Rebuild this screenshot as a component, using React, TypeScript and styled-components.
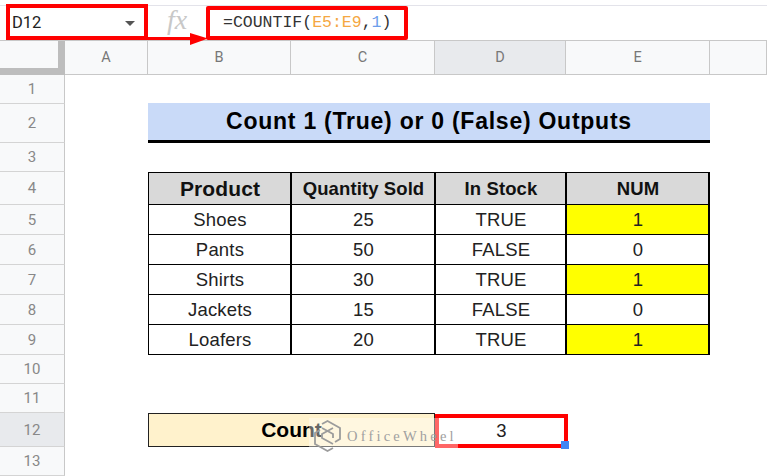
import React from "react";
import styled, { createGlobalStyle } from "styled-components";

const Global = createGlobalStyle`
  html, body { margin: 0; padding: 0; background: #fff; overflow: hidden; }
  body { font-family: Roboto, "Liberation Sans", sans-serif; }
`;

const Page = styled.div`
  position: relative;
  width: 767px;
  height: 476px;
  overflow: hidden;
  background: #fff;
`;

const FormulaBar = styled.div`
  height: 41px;
  box-sizing: border-box;
  padding-top: 4px;
  display: flex;
  align-items: flex-start;
  border-bottom: 1px solid #c8c8c8;
  position: relative;
  &::before {
    content: "";
    position: absolute;
    left: 0;
    right: 0;
    top: 5px;
    height: 1px;
    background: #e3e3ea;
  }
`;

const NameBox = styled.div`
  position: relative;
  z-index: 1;
  margin-left: 6px;
  width: 142px;
  height: 36px;
  box-sizing: border-box;
  border: 4px solid #f00;
  background: #fff;
  display: flex;
  align-items: center;
  justify-content: space-between;
  padding: 0 9px 0 2px;
  font-size: 16.5px;
  color: #222;
`;

const Caret = styled.span`
  width: 0;
  height: 0;
  border-left: 5px solid transparent;
  border-right: 5px solid transparent;
  border-top: 5px solid #555;
  margin-top: 2px;
`;

const FxSlot = styled.div`
  width: 58px;
  text-align: center;
  font-family: "Liberation Serif", serif;
  font-style: italic;
  font-size: 28px;
  line-height: 32px;
  color: #c8c8c8;
`;

const FormulaBox = styled.div`
  position: relative;
  z-index: 1;
  width: 202px;
  height: 34px;
  margin-top: 2px;
  box-sizing: border-box;
  border: 4px solid #f00;
  border-radius: 2px;
  background: #fff;
  font-family: "Liberation Mono", monospace;
  font-size: 16.5px;
  line-height: 26px;
  padding-left: 13px;
  color: #333;
  white-space: nowrap;
`;

const Tok = styled.span<{ $c: string }>`
  color: ${(p) => p.$c};
`;

const Arrow = styled.svg`
  position: absolute;
  left: 140px;
  top: 32px;
  z-index: 2;
`;

const Sheet = styled.div`
  display: grid;
  grid-template-columns: 65px 83px 143px 144px 131px 144px 57px;
  grid-template-rows: 34px 29px 39px 29px 33px repeat(5, 30px) 29px 29px 34px 29px;
`;

const Corner = styled.div`
  background: #f8f9fa;
  border-right: 7px solid #bdbdbd;
  border-bottom: 7px solid #bdbdbd;
  box-sizing: border-box;
`;

const ColHead = styled.div<{ $active?: boolean }>`
  background: ${(p) => (p.$active ? "#e8eaed" : "#f8f9fa")};
  border-right: 1px solid #c8c8c8;
  border-bottom: 1px solid #c8c8c8;
  box-sizing: border-box;
  display: flex;
  align-items: center;
  justify-content: center;
  font-size: 14.5px;
  color: #777;
`;

const RowHead = styled.div<{ $active?: boolean; $row: number }>`
  grid-column: 1;
  grid-row: ${(p) => p.$row};
  background: ${(p) => (p.$active ? "#e8eaed" : "#f8f9fa")};
  border-right: 1px solid #c8c8c8;
  border-bottom: 1px solid #d4d4d4;
  box-sizing: border-box;
  display: flex;
  align-items: center;
  justify-content: center;
  font-size: 15px;
  color: #888;
`;

const Title = styled.div`
  grid-column: 3 / 7;
  grid-row: 3;
  margin-top: -1px;
  background: #c9daf8;
  border-bottom: 3px solid #000;
  box-sizing: border-box;
  display: flex;
  align-items: center;
  justify-content: center;
  font-family: "Liberation Sans", sans-serif;
  font-weight: 700;
  font-size: 23px;
  letter-spacing: 0.75px;
  color: #000;
`;

const Table = styled.div`
  grid-column: 3 / 7;
  grid-row: 5 / 11;
  display: grid;
  grid-template-columns: 143px 144px 131px 143px;
  grid-template-rows: 32px repeat(5, 30px);
  border-top: 1px solid #000;
  border-left: 1px solid #000;
  box-sizing: border-box;
`;

const HeadCell = styled.div<{ $size: number }>`
  background: #d9d9d9;
  border-right: 2px solid #000;
  border-bottom: 1px solid #000;
  box-sizing: border-box;
  display: flex;
  align-items: center;
  justify-content: center;
  padding-left: 1px;
  font-family: "Liberation Sans", sans-serif;
  font-weight: 700;
  font-size: ${(p) => p.$size}px;
  letter-spacing: 0.1px;
  color: #111;
  white-space: nowrap;
`;

const Cell = styled.div<{ $hl?: boolean }>`
  background: ${(p) => (p.$hl ? "#ffff00" : "#fff")};
  border-right: 2px solid #000;
  border-bottom: 1px solid #000;
  box-sizing: border-box;
  display: flex;
  align-items: center;
  justify-content: center;
  padding: 1px 0 0 1px;
  font-family: "Liberation Sans", sans-serif;
  font-size: 18.5px;
  letter-spacing: 0.2px;
  color: #222;
`;

const CountLabel = styled.div`
  grid-column: 3 / 5;
  grid-row: 13;
  background: #fff2cc;
  border: 1px solid #222;
  box-sizing: border-box;
  display: flex;
  align-items: center;
  justify-content: center;
  font-family: "Liberation Sans", sans-serif;
  font-weight: 700;
  font-size: 21px;
  color: #000;
`;

const CountValue = styled.div`
  grid-column: 5;
  grid-row: 13;
  margin-right: -2px;
  margin-top: 1px;
  margin-bottom: -1px;
  border: 4px solid #f00;
  box-sizing: border-box;
  position: relative;
  display: flex;
  align-items: center;
  justify-content: center;
  font-family: "Liberation Sans", sans-serif;
  font-size: 18.5px;
  color: #222;
  &::after {
    content: "";
    position: absolute;
    right: -5px;
    bottom: -5px;
    width: 8px;
    height: 8px;
    background: #4285f4;
  }
`;

const Watermark = styled.div`
  position: absolute;
  left: 309px;
  top: 418px;
  width: 149px;
  height: 36px;
  display: flex;
  align-items: center;
  gap: 5px;
  padding-left: 4px;
  box-sizing: border-box;
  background: rgba(255, 255, 255, 0.4);
  font-family: "Liberation Serif", serif;
  font-size: 14.5px;
  letter-spacing: 3.2px;
  color: #a0a0a0;
  white-space: nowrap;
  z-index: 3;
`;

const cols = ["A", "B", "C", "D", "E", ""];
const rows = [
  ["Shoes", "25", "TRUE", "1"],
  ["Pants", "50", "FALSE", "0"],
  ["Shirts", "30", "TRUE", "1"],
  ["Jackets", "15", "FALSE", "0"],
  ["Loafers", "20", "TRUE", "1"],
];

export default function App() {
  return (
    <Page>
      <Global />
      <FormulaBar>
        <NameBox>
          D12
          <Caret />
        </NameBox>
        <FxSlot>fx</FxSlot>
        <FormulaBox>
          =COUNTIF(<Tok $c="#f5a742">E5:E9</Tok>,<Tok $c="#6d9eeb">1</Tok>)
        </FormulaBox>
      </FormulaBar>
      <Arrow width="70" height="14" viewBox="0 0 70 14">
        <path d="M0 6.5H52" stroke="#f00" strokeWidth="3" />
        <path d="M50 1L68 6.5L50 13Z" fill="#f00" />
      </Arrow>
      <Sheet>
        <Corner />
        {cols.map((c, i) => (
          <ColHead key={i} $active={c === "D"}>
            {c}
          </ColHead>
        ))}
        {Array.from({ length: 13 }, (_, i) => (
          <RowHead key={i} $row={i + 2} $active={i === 11}>
            {i + 1}
          </RowHead>
        ))}
        <Title>Count 1 (True) or 0 (False) Outputs</Title>
        <Table>
          <HeadCell $size={21}>Product</HeadCell>
          <HeadCell $size={18.5}>Quantity Sold</HeadCell>
          <HeadCell $size={18.5}>In Stock</HeadCell>
          <HeadCell $size={18.5}>NUM</HeadCell>
          {rows.map((r) =>
            r.map((v, j) => (
              <Cell key={r[0] + j} $hl={j === 3 && v === "1"}>
                {v}
              </Cell>
            ))
          )}
        </Table>
        <CountLabel>Count</CountLabel>
        <CountValue>3</CountValue>
      </Sheet>
      <Watermark>
        <svg width="29" height="34" viewBox="0 0 29 34" fill="none" stroke="#9c9c9c" strokeWidth="1.8">
          <path d="M9 5L14.500 2L27 9V20L22 23" />
          <path d="M20 29L14.500 32L2 25V14L7 11" />
          <path d="M20 9L9 15V19L20 25" />
          <path d="M9 9L20 15V19" />
        </svg>
        OfficeWheel
      </Watermark>
    </Page>
  );
}
